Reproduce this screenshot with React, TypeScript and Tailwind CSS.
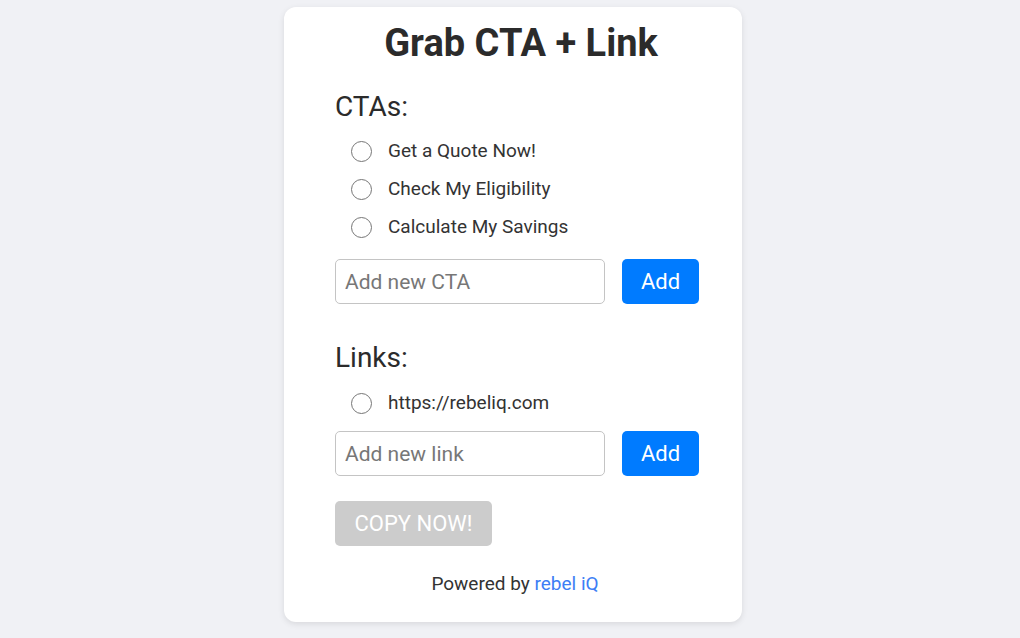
import React, { useState } from 'react';

const ctas = ['Get a Quote Now!', 'Check My Eligibility', 'Calculate My Savings'];
const links = ['https://rebeliq.com'];

const Radio: React.FC<{ label: string; checked: boolean; onClick: () => void }> = ({ label, checked, onClick }) => (
  <label onClick={onClick} className="flex items-center h-[38px] pl-[16px] cursor-pointer">
    <span className="w-[21px] h-[21px] shrink-0 rounded-full border-[1.5px] border-[#767676] bg-white flex items-center justify-center">
      {checked && <span className="w-[11px] h-[11px] rounded-full bg-[#007bff]" />}
    </span>
    <span className="ml-[16px] text-[19px] text-[#333]">{label}</span>
  </label>
);

const AddRow: React.FC<{ placeholder: string }> = ({ placeholder }) => (
  <div className="flex items-center gap-[17px]">
    <input
      placeholder={placeholder}
      className="w-[270px] h-[45px] shrink-0 px-[9px] text-[21px] border border-[#c4c4c4] rounded-[5px] outline-none placeholder:text-[#777] text-[#333]"
    />
    <button className="w-[77px] h-[45px] shrink-0 rounded-[5px] bg-[#007bff] text-white text-[22px]">Add</button>
  </div>
);

export default function App() {
  const [cta, setCta] = useState<number | null>(null);
  const [link, setLink] = useState<number | null>(null);

  return (
    <div className="min-h-[638px] bg-[#f0f1f5] flex justify-center pl-[6px] font-['Roboto',sans-serif]">
      <div className="w-[458px] mt-[7px] self-start bg-white rounded-[12px] shadow-[0_2px_6px_rgba(0,0,0,0.1)] pt-[8px] pb-[26px] pl-[51px] pr-[43px]">
        <h1 className="pl-[8px] text-center text-[38px] leading-[56px] font-bold text-[#2b2b2b]">Grab CTA + Link</h1>

        {/* CTAs */}
        <h2 className="mt-[20px] text-[28px] leading-[32px] font-normal text-[#2b2b2b]">CTAs:</h2>
        <div className="mt-[9px]">
          {ctas.map((c, i) => (
            <Radio key={c} label={c} checked={cta === i} onClick={() => setCta(i)} />
          ))}
        </div>
        <div className="mt-[13px]">
          <AddRow placeholder="Add new CTA" />
        </div>

        {/* Links */}
        <h2 className="mt-[38px] text-[28px] leading-[32px] font-normal text-[#2b2b2b]">Links:</h2>
        <div className="mt-[10px]">
          {links.map((l, i) => (
            <Radio key={l} label={l} checked={link === i} onClick={() => setLink(i)} />
          ))}
        </div>
        <div className="mt-[9px]">
          <AddRow placeholder="Add new link" />
        </div>

        <button className="mt-[25px] w-[157px] h-[45px] rounded-[5px] bg-[#cccccc] text-white text-[22px]">COPY NOW!</button>

        <p className="mt-[26px] pr-[4px] text-center text-[19px] leading-[24px] text-[#333]">
          Powered by <span className="text-[#3d7ef5]">rebel iQ</span>
        </p>
      </div>
    </div>
  );
}
